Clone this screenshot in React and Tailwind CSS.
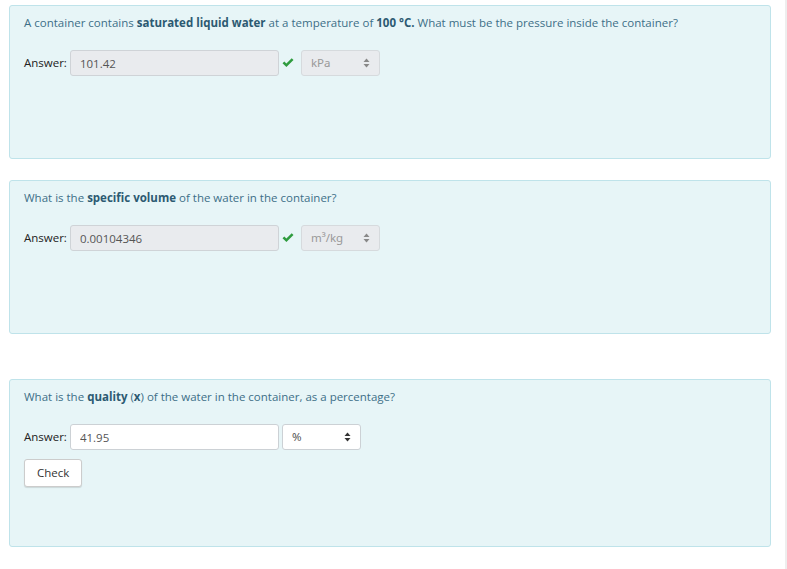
import { useState } from "react";

function SelectArrows({ className = "" }) {
  return (
    <svg width="7" height="10" viewBox="0 0 7 10" className={className}>
      <path d="M3.5 0.5 L6.5 4 L0.5 4 Z" fill="currentColor" />
      <path d="M3.5 9.5 L6.5 6 L0.5 6 Z" fill="currentColor" />
    </svg>
  );
}

function Check() {
  return (
    <svg width="12" height="10" viewBox="0 0 12 10" className="ml-[3px] mr-[7px]">
      <path d="M0.5 5.2 L2.3 3.4 L4.4 5.5 L9.7 0.2 L11.5 2 L4.4 9.1 Z" fill="#2f9c3f" />
    </svg>
  );
}

function AnswerRow({ value, unit, done }) {
  const [v, setV] = useState(value);
  return (
    <div className="flex items-center">
      <span className="text-[#222] mr-[3px]">Answer:</span>
      <input
        value={v}
        onChange={(e) => setV(e.target.value)}
        disabled={done}
        className={
          "w-[209px] h-[26px] px-[9px] rounded-[3px] border outline-none text-[#555] " +
          (done ? "bg-[#e9ebee] border-[#cfd3d7]" : "bg-white border-[#ccd1d5]")
        }
      />
      {done ? <Check /> : <span className="w-[3px]" />}
      <div
        className={
          "flex items-center justify-between w-[79px] h-[26px] pl-[9px] pr-[9px] rounded-[3px] border " +
          (done
            ? "bg-[#e9ebee] border-[#d6dadd] text-[#999]"
            : "bg-white border-[#ccd1d5] text-[#555]")
        }
      >
        <span style={{ fontFamily: "'Noto Sans', 'Open Sans', sans-serif" }}>{unit}</span>
        <SelectArrows className={done ? "text-[#888]" : "text-[#333]"} />
      </div>
    </div>
  );
}

function Panel({ children, h }) {
  return (
    <div
      className={
        "border border-[#bfe3ea] bg-[#e7f5f7] rounded-[3px] px-[14px] pt-[9px] " + h
      }
    >
      {children}
    </div>
  );
}

export default function App() {
  return (
    <div
      className="flex min-h-[569px] bg-white text-[11.5px]"
      style={{ fontFamily: "'Open Sans', 'Noto Sans', sans-serif" }}
    >
      <div className="flex-1 pl-[9px] pr-[14px] pt-[5px]">
        <Panel h="h-[154px]">
          <p className="text-[#3d6f87] leading-[16px]">
            A container contains <b className="text-[#2c5a72]">saturated liquid water</b> at a
            temperature of <b className="text-[#2c5a72]">100 °C.</b> What must be the pressure
            inside the container?
          </p>
          <div className="mt-[19px]">
            <AnswerRow value="101.42" unit="kPa" done />
          </div>
        </Panel>

        <div className="h-[21px]" />

        <Panel h="h-[154px]">
          <p className="text-[#3d6f87] leading-[16px]">
            What is the <b className="text-[#2c5a72]">specific volume</b> of the water in the
            container?
          </p>
          <div className="mt-[19px]">
            <AnswerRow value="0.00104346" unit="m³/kg" done />
          </div>
        </Panel>

        <div className="h-[45px]" />

        <Panel h="h-[168px]">
          <p className="text-[#3d6f87] leading-[16px]">
            What is the <b className="text-[#2c5a72]">quality</b> (<b className="text-[#2c5a72]">x</b>)
            of the water in the container, as a percentage?
          </p>
          <div className="mt-[19px]">
            <AnswerRow value="41.95" unit="%" />
          </div>
          <button className="mt-[9px] h-[28px] px-[12px] bg-white border border-[#ccc] rounded-[3px] text-[#333] shadow-[0_1px_1px_rgba(0,0,0,0.12)]">
            Check
          </button>
        </Panel>
      </div>
      <div className="w-[2px] bg-[#eeeeee]" />
    </div>
  );
}
